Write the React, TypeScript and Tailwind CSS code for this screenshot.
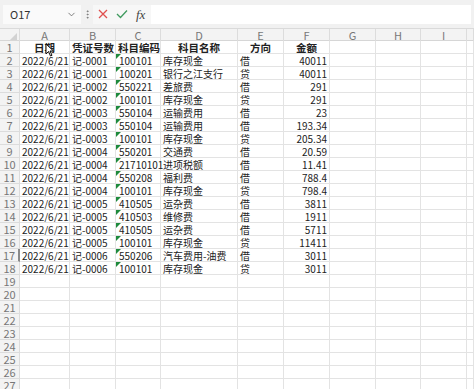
import React from 'react';
import { ChevronDown, EllipsisVertical } from 'lucide-react';

const cols = ['A', 'B', 'C', 'D', 'E', 'F', 'G', 'H', 'I', ''];

const rows: [string, string, string, string, string][] = [
  ['记-0001', '100101', '库存现金', '借', '40011'],
  ['记-0001', '100201', '银行之江支行', '贷', '40011'],
  ['记-0002', '550221', '差旅费', '借', '291'],
  ['记-0002', '100101', '库存现金', '贷', '291'],
  ['记-0003', '550104', '运输费用', '借', '23'],
  ['记-0003', '550104', '运输费用', '借', '193.34'],
  ['记-0003', '100101', '库存现金', '贷', '205.34'],
  ['记-0004', '550201', '交通费', '借', '20.59'],
  ['记-0004', '21710101', '进项税额', '借', '11.41'],
  ['记-0004', '550208', '福利费', '借', '788.4'],
  ['记-0004', '100101', '库存现金', '贷', '798.4'],
  ['记-0005', '410505', '运杂费', '借', '3811'],
  ['记-0005', '410503', '维修费', '借', '1911'],
  ['记-0005', '410505', '运杂费', '借', '5711'],
  ['记-0005', '100101', '库存现金', '贷', '11411'],
  ['记-0006', '550206', '汽车费用-油费', '借', '3011'],
  ['记-0006', '100101', '库存现金', '贷', '3011'],
];

const gridCols = 'grid grid-cols-[20px_50px_46px_45px_77px_46px_46px_46px_45px_46px_1fr]';
const cell = 'h-[13px] border-r border-b border-[#e3e3e3] overflow-hidden whitespace-nowrap px-[2px]';

const RowHead: React.FC<{ n: number }> = ({ n }) => (
  <div
    className={`h-[13px] border-b border-[#dcdcdc] bg-[#f3f3f3] text-[#777] text-[11px] text-center ${
      n === 17 ? 'border-r-2 border-r-[#8a8a8a]' : 'border-r'
    }`}
  >
    {n}
  </div>
);

const App: React.FC = () => {
  return (
    <div
      className="w-[474px] h-[389px] overflow-hidden bg-white text-[#222] text-[10px] leading-[13px] relative"
      style={{ fontFamily: '"Noto Sans CJK SC", "Noto Sans", sans-serif' }}
    >
      {/* Formula bar */}
      <div className="h-[29px] bg-[#f1f1f1] flex items-center px-[3px] border-b border-[#dadada]">
        <div className="w-[78px] h-[19px] bg-[#fafafa] flex items-center justify-between pl-[7px] pr-[4px] text-[11px] text-[#333]">
          <span>O17</span>
          <ChevronDown size={11} strokeWidth={1.6} className="text-[#555]" />
        </div>
        <EllipsisVertical size={11} className="text-[#777] ml-[1px]" />
        <div className="flex items-center gap-[8px] pl-[5px] pr-[6px] h-[19px] bg-[#f7f7f7]">
          <svg width="10" height="10" viewBox="0 0 10 10">
            <path d="M1 1 L9 9 M9 1 L1 9" stroke="#e0504f" strokeWidth="1.3" />
          </svg>
          <svg width="12" height="10" viewBox="0 0 12 10">
            <path d="M1 5 L4.5 8.5 L11 1.5" stroke="#3f9a5e" strokeWidth="1.3" fill="none" />
          </svg>
          <span className="italic text-[13px] text-[#444]" style={{ fontFamily: '"Liberation Serif", serif' }}>
            fx
          </span>
        </div>
        <div className="flex-1 h-[19px] bg-white" />
      </div>

      {/* Column headers */}
      <div className={`${gridCols} h-[12px] bg-[#f3f3f3] border-b border-[#d6d6d6] text-[#777] text-[11px] leading-[12px]`}>
        <div className="border-r border-[#dcdcdc] relative">
          <div className="absolute right-[2px] bottom-[1px] w-0 h-0 border-l-[7px] border-l-transparent border-b-[7px] border-b-[#d2d2d2]" />
        </div>
        {cols.map((c, i) => (
          <div key={i} className="text-center border-r border-[#dcdcdc]">
            {c}
          </div>
        ))}
      </div>

      {/* Header row */}
      <div className={gridCols}>
        <RowHead n={1} />
        {['日期', '凭证号数', '科目编码', '科目名称', '方向', '金额'].map((h) => (
          <div key={h} className={`${cell} text-center font-bold text-[10.5px]`}>
            {h}
          </div>
        ))}
        {[0, 1, 2, 3].map((i) => (
          <div key={i} className={cell} />
        ))}
      </div>

      {/* Data rows */}
      {rows.map((r, i) => (
        <div key={i} className={gridCols}>
          <RowHead n={i + 2} />
          <div className={`${cell} text-right`}>2022/6/21</div>
          <div className={cell}>{r[0]}</div>
          <div className="h-[13px] border-r border-b border-[#e3e3e3] whitespace-nowrap relative pl-[3px] overflow-visible">
            <div className="absolute left-0 top-0 w-0 h-0 border-t-[5px] border-t-[#1e8a3c] border-r-[5px] border-r-transparent" />
            {r[1]}
          </div>
          <div className={cell}>{r[2]}</div>
          <div className={cell}>{r[3]}</div>
          <div className={`${cell} text-right`}>{r[4]}</div>
          {[0, 1, 2, 3].map((j) => (
            <div key={j} className={cell} />
          ))}
        </div>
      ))}

      {/* Empty rows */}
      {Array.from({ length: 9 }, (_, i) => (
        <div key={i} className={gridCols}>
          <RowHead n={i + 19} />
          {Array.from({ length: 10 }, (_, j) => (
            <div key={j} className={cell} />
          ))}
        </div>
      ))}

      {/* Mouse cursor */}
      <svg className="absolute left-[45px] top-[43px]" width="10" height="14" viewBox="0 0 10 14">
        <path d="M1 1 L1 11 L3.5 8.5 L5.5 13 L7 12.3 L5 8 L8.5 8 Z" fill="#fff" stroke="#111" strokeWidth="1" />
      </svg>
    </div>
  );
};

export default App;
